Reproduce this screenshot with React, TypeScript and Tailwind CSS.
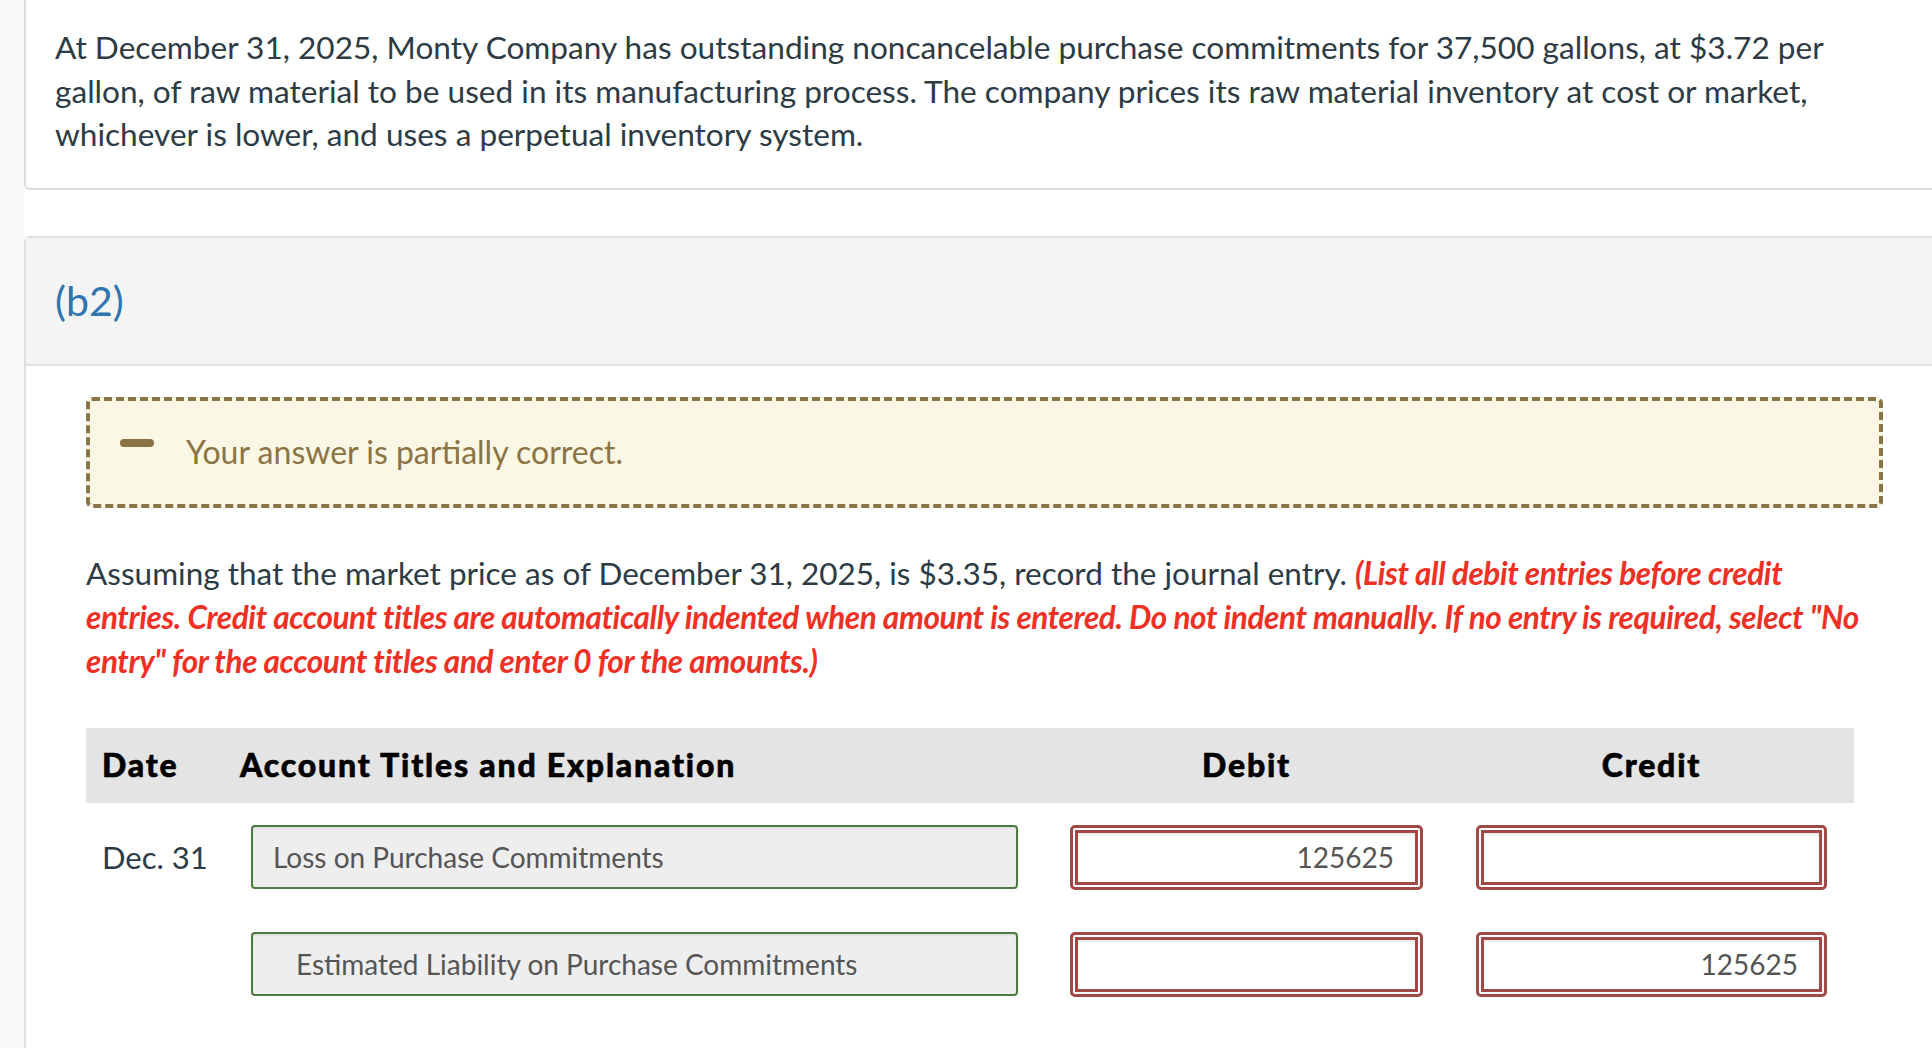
export default function App() {
    return (
        <div className="min-h-screen w-full overflow-hidden bg-white flex font-['Lato',sans-serif] text-[#2d3b45]">
            <div className="w-[24px] shrink-0 bg-[#f8f8f8]" />

            <div className="w-[1919px] shrink-0 flex flex-col">
                {/* question text */}
                <div className="bg-white border-l-2 border-b-2 border-[#dedede] rounded-bl-[6px] pl-[29px] pr-[30px] pt-[26px] pb-[31px] text-[31.6px] leading-[43.5px]">
                    At December 31, 2025, Monty Company has outstanding noncancelable purchase commitments for 37,500 gallons, at $3.72 per gallon, of raw material to be used in its manufacturing process. The company prices its raw material inventory at cost or market, whichever is lower, and uses a perpetual inventory system.
                </div>

                <div className="mt-[46px] flex-1 flex flex-col border-l-2 border-t-2 border-[#e0e0e0] rounded-tl-[6px]">
                    <div className="bg-[#f4f4f4] border-b-2 border-[#e0e0e0] pl-[29px] pt-[36px] pb-[36px] text-[41px] leading-[54px] text-[#2f75b0]">
                        (b2)
                    </div>

                    <div className="flex-1 bg-white px-[60px] pt-[31px]">
                        <div className="h-[111px] border-4 border-dashed border-[#8b7444] rounded-[6px] bg-[#fbf7e5] flex items-center text-[#8b7444]">
                            <div className="self-start mt-[38px] ml-[30px] w-[34px] h-[8px] rounded-full bg-[#8b7444]" />
                            <span className="ml-[32px] text-[32px] leading-[43.5px]">Your answer is partially correct.</span>
                        </div>

                        <p className="mt-[43px] text-[31.5px] leading-[44px]">
                            Assuming that the market price as of December 31, 2025, is $3.35, record the journal entry.{' '}
                            <span className="font-bold italic text-[#ee3124] tracking-[-0.4px]">
                                (List all debit entries before credit entries. Credit account titles are automatically indented when amount is entered. Do not indent manually. If no entry is required, select "No entry" for the account titles and enter 0 for the amounts.)
                            </span>
                        </p>

                        <div className="mt-[45px] w-[1768px]">
                            <div className="grid grid-cols-[149px_809px_405px_405px] h-[75px] items-center bg-[#e4e4e4] text-black font-black text-[32px] tracking-[1.8px] [-webkit-text-stroke:0.6px_black]">
                                <span className="pl-[16px]">Date</span>
                                <span className="pl-[5px]">Account Titles and Explanation</span>
                                <span className="text-center">Debit</span>
                                <span className="text-center">Credit</span>
                            </div>

                            <JournalRow date="Dec. 31" account="Loss on Purchase Commitments" debit="125625" credit="" top="mt-[22px]" />
                            <JournalRow date="" account="Estimated Liability on Purchase Commitments" debit="" credit="125625" indent top="mt-[42px]" />
                        </div>
                    </div>
                </div>
            </div>
        </div>
    )
}

function JournalRow({ date, account, debit, credit, indent, top }: { date: string; account: string; debit: string; credit: string; indent?: boolean; top: string }) {
    return (
        <div className={`grid grid-cols-[149px_809px_405px_405px] items-center ${top}`}>
            <span className="pl-[16px] text-[31px]">{date}</span>
            <div className={`ml-[16px] w-[767px] h-[64px] border-2 border-[#4b7b3f] rounded-[4px] bg-[#eeeeee] shadow-[inset_0_2px_2px_rgba(0,0,0,0.06)] flex items-center text-[28px] text-[#555555] ${indent ? 'pl-[43px]' : 'pl-[20px]'}`}>
                {account}
            </div>
            <AmountBox value={debit} className="ml-[26px] w-[353px]" />
            <AmountBox value={credit} className="ml-[27px] w-[351px]" />
        </div>
    )
}

function AmountBox({ value, className }: { value: string; className: string }) {
    return (
        <div className={`h-[65px] rounded-[5px] border-[3px] border-[#a04a47] p-[2px] bg-white ${className}`}>
            <div className="h-full border-[3px] border-[#a04a47] shadow-[inset_0_2px_2px_rgba(0,0,0,0.08)] flex items-center justify-end pr-[21px] text-[28px] text-[#555555]">
                {value}
            </div>
        </div>
    )
}
